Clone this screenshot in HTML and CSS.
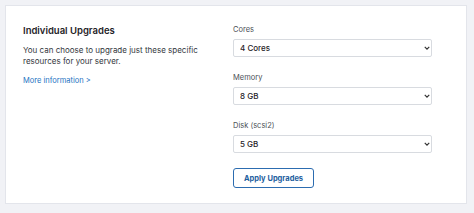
FILE: index.html
```html
<!DOCTYPE html>
<html lang="en">
<head>
    <meta charset="UTF-8">
    <meta name="viewport" content="width=device-width, initial-scale=1.0">
    <title>Individual Upgrades</title>
    <link rel="stylesheet" href="styles.css">
</head>
<body>
    <div class="card">
        <div class="intro">
            <div class="title">Individual Upgrades</div>
            <p class="desc">You can choose to upgrade just these specific resources for your server.</p>
            <a href="#" class="more-link">More information &gt;</a>
        </div>
        <form class="upgrade-form">
            <div class="field">
                <label class="field-label" for="cores">Cores</label>
                <div class="select-wrap">
                    <select class="field-select" id="cores">
                        <option>4 Cores</option>
                        <option>8 Cores</option>
                    </select>
                    <svg class="chevron" viewBox="0 0 8 5" width="6" height="4"><path d="M1 1l3 3 3-3" fill="none" stroke="#333" stroke-width="1.6"/></svg>
                </div>
            </div>
            <div class="field">
                <label class="field-label" for="memory">Memory</label>
                <div class="select-wrap">
                    <select class="field-select" id="memory">
                        <option>8 GB</option>
                        <option>16 GB</option>
                    </select>
                    <svg class="chevron" viewBox="0 0 8 5" width="6" height="4"><path d="M1 1l3 3 3-3" fill="none" stroke="#333" stroke-width="1.6"/></svg>
                </div>
            </div>
            <div class="field">
                <label class="field-label" for="disk">Disk (scsi2)</label>
                <div class="select-wrap">
                    <select class="field-select" id="disk">
                        <option>5 GB</option>
                        <option>10 GB</option>
                    </select>
                    <svg class="chevron" viewBox="0 0 8 5" width="6" height="4"><path d="M1 1l3 3 3-3" fill="none" stroke="#333" stroke-width="1.6"/></svg>
                </div>
            </div>
            <button type="button" class="apply-btn">Apply Upgrades</button>
        </form>
    </div>
</body>
</html>
```

FILE: styles.css
```css
body {
    font-family: 'Inter', 'Liberation Sans', sans-serif;
    margin: 0;
    padding: 5px;
    background-color: #f1f2f6;
    color: #222;
}

.card {
    width: 409px;
    background-color: #fff;
    border: 1px solid #e3e5eb;
    padding: 18px 34px 15px 17px;
    display: grid;
    grid-template-columns: 210px 1fr;
}

.title {
    font-size: 9.5px;
    font-weight: 600;
    line-height: 14px;
    color: #1f2328;
}

.desc {
    margin: 7px 0 0;
    font-size: 8px;
    line-height: 11px;
    color: #33373d;
    width: 175px;
}

.more-link {
    display: block;
    margin-top: 8px;
    font-size: 7.5px;
    line-height: 11px;
    color: #2473c2;
    text-decoration: none;
}

.upgrade-form {
    display: flex;
    flex-direction: column;
    align-items: flex-start;
}

.field {
    width: 100%;
    margin-bottom: 15px;
}

.field-label {
    display: block;
    font-size: 7.5px;
    line-height: 11px;
    color: #4b4f56;
    margin-bottom: 4px;
}

.select-wrap {
    position: relative;
}

.field-select {
    display: block;
    appearance: none;
    -webkit-appearance: none;
    width: 100%;
    height: 18px;
    margin: 0;
    padding: 0 6px;
    border: 1px solid #d8dbe0;
    border-radius: 2px;
    background-color: #fff;
    font-family: inherit;
    font-size: 8px;
    font-weight: 500;
    color: #1f2328;
    outline: none;
}

.chevron {
    position: absolute;
    right: 2px;
    top: 7px;
}

.field:last-of-type {
    margin-bottom: 15px;
}

.apply-btn {
    height: 20px;
    width: 81px;
    padding: 0;
    border: 1.5px solid #2c6cb0;
    border-radius: 3px;
    background-color: #fff;
    color: #1d5e9e;
    font-family: inherit;
    font-size: 7.5px;
    font-weight: 700;
    cursor: pointer;
}
```
